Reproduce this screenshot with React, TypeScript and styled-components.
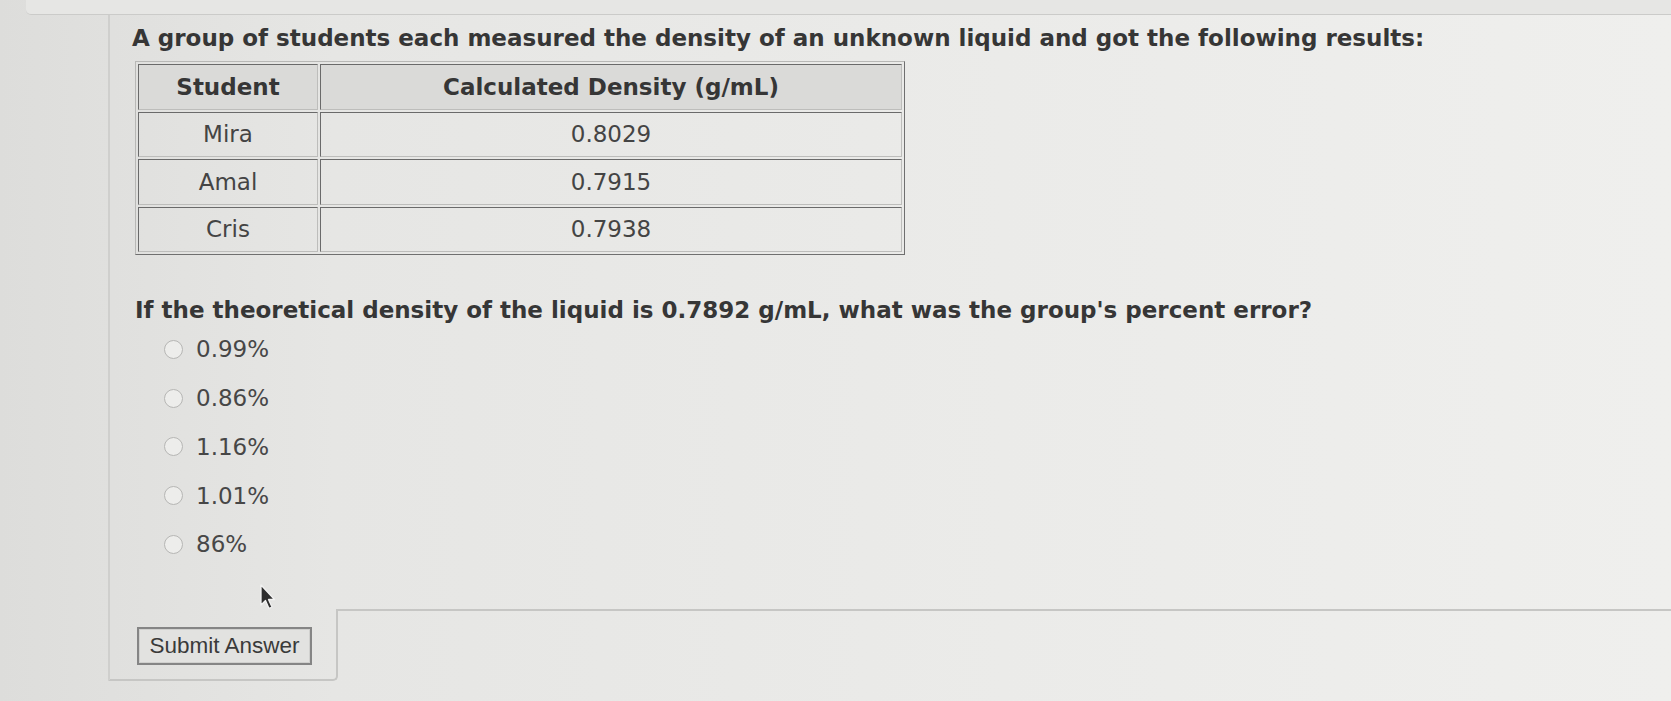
import React from "react";
import styled, { createGlobalStyle } from "styled-components";

const Global = createGlobalStyle`
  html, body {
    margin: 0;
    padding: 0;
  }
  body {
    width: 1671px;
    height: 701px;
    overflow: hidden;
    background: linear-gradient(90deg, #dddddb 0%, #e6e6e4 20%, #ebebe9 60%, #efefed 100%);
    font-family: "DejaVu Sans", Verdana, sans-serif;
    color: #3c3c3c;
  }
`;

const Page = styled.div`
  position: relative;
  width: 1671px;
  height: 701px;
`;

const TopBar = styled.div`
  height: 14px;
  margin-left: 26px;
  background: #e6e6e4;
  border-bottom: 1px solid #cbcbc9;
  border-bottom-left-radius: 5px;
`;

const Main = styled.div`
  padding-left: 108px;
`;

const Upper = styled.div`
  border-left: 2px solid #cfcfcd;
  padding: 10px 0 40px 25px;
`;

const Heading = styled.h2`
  margin: 0 0 9px -3px;
  font-size: 23px;
  line-height: 27px;
  font-weight: bold;
  color: #363636;
`;

const Table = styled.table`
  border-collapse: separate;
  border-spacing: 2px;
  border: 1px solid;
  border-color: #b8b8b6 #6f6f6f #6f6f6f #b8b8b6;
  width: 770px;
`;

const Cell = styled.td<{ $head?: boolean; $wide?: boolean }>`
  height: 43.5px;
  padding: 0;
  border: 1px solid;
  border-color: #6a6a6a #bdbdbb #bdbdbb #6a6a6a;
  text-align: center;
  vertical-align: middle;
  font-size: 23px;
  font-weight: ${(p) => (p.$head ? "bold" : "normal")};
  background: ${(p) => (p.$head ? "#dadad8" : "transparent")};
  color: ${(p) => (p.$head ? "#363636" : "#444")};
  width: ${(p) => (p.$wide ? "auto" : "178px")};
`;

const Question = styled.p`
  margin: 42px 0 1px 0;
  font-size: 23px;
  line-height: 27px;
  font-weight: bold;
  color: #363636;
`;

const Options = styled.div`
  display: flex;
  flex-direction: column;
  padding-left: 29px;
`;

const Option = styled.label`
  display: flex;
  align-items: center;
  height: 48.75px;
  gap: 13px;
  font-size: 23px;
  color: #474747;
`;

const Radio = styled.span`
  width: 17px;
  height: 17px;
  border-radius: 50%;
  border: 1.5px solid #b6b6b4;
  background: #ededeb;
  flex: none;
`;

const Bottom = styled.div`
  display: flex;
  align-items: flex-start;
`;

const Tab = styled.div`
  width: 175px;
  padding: 18px 24px 14px 27px;
  border-left: 2px solid #cfcfcd;
  border-right: 2px solid #c6c6c4;
  border-bottom: 2px solid #c6c6c4;
  border-bottom-right-radius: 5px;
`;

const Filler = styled.div`
  flex: 1;
  margin-left: -2px;
  border-top: 2px solid #c6c6c4;
`;

const SubmitButton = styled.button`
  width: 175px;
  height: 38px;
  padding: 0;
  font-family: "Liberation Sans", Arial, sans-serif;
  font-size: 22.5px;
  color: #3a3a3a;
  background: #e2e2e0;
  border: 2px solid #858585;
  box-shadow: inset 0 0 0 1px #d0d0ce;
`;

const Cursor = styled.svg`
  position: absolute;
  left: 259px;
  top: 584px;
`;

const rows = [
  ["Mira", "0.8029"],
  ["Amal", "0.7915"],
  ["Cris", "0.7938"],
];

const options = ["0.99%", "0.86%", "1.16%", "1.01%", "86%"];

export default function App() {
  return (
    <Page>
      <Global />
      <TopBar />
      <Main>
        <Upper>
          <Heading>
            A group of students each measured the density of an unknown liquid and got the following results:
          </Heading>
          <Table>
            <tbody>
              <tr>
                <Cell $head>Student</Cell>
                <Cell $head $wide>
                  Calculated Density (g/mL)
                </Cell>
              </tr>
              {rows.map(([name, val]) => (
                <tr key={name}>
                  <Cell>{name}</Cell>
                  <Cell $wide>{val}</Cell>
                </tr>
              ))}
            </tbody>
          </Table>
          <Question>
            If the theoretical density of the liquid is 0.7892 g/mL, what was the group's percent error?
          </Question>
          <Options>
            {options.map((o) => (
              <Option key={o}>
                <Radio />
                {o}
              </Option>
            ))}
          </Options>
        </Upper>
        <Bottom>
          <Tab>
            <SubmitButton>Submit Answer</SubmitButton>
          </Tab>
          <Filler />
        </Bottom>
      </Main>
      <Cursor width="18" height="28" viewBox="0 0 18 28">
        <path
          d="M2 1 L2 21 L6.5 16.5 L10 24.5 L13 23 L9.5 15.5 L15.5 15.5 Z"
          fill="#2e2e2e"
          stroke="#f2f2f2"
          strokeWidth="1.3"
          strokeLinejoin="round"
        />
      </Cursor>
    </Page>
  );
}
